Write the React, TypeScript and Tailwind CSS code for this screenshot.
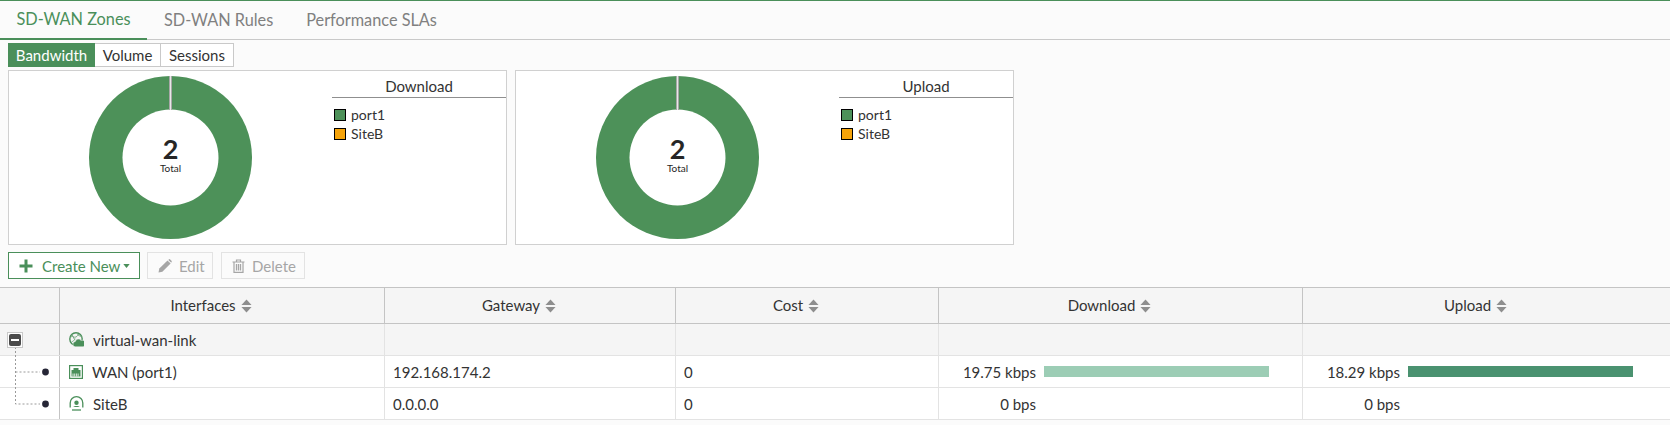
const font = "font-['Lato','Open_Sans',sans-serif]";
const green = "#4a8f5a";

function SortIcon() {
  return (
    <svg viewBox="0 0 12 14" className="ml-[5px] h-[14px] w-[11px]" fill="#8e8e8e">
      <path d="M6 0 L11.5 6 H0.5 Z" />
      <path d="M0.5 8 H11.5 L6 14 Z" />
    </svg>
  );
}

function Donut() {
  return (
    <div className="relative h-[163px] w-[163px]">
      <svg viewBox="0 0 163 163" className="h-full w-full">
        <circle cx="81.5" cy="81.5" r="81.5" fill="#4d9159" />
        <circle cx="81.5" cy="81.5" r="48" fill="#fff" />
        <rect x="80" y="0" width="3" height="34" fill="#a8a8a8" />
        <rect x="81" y="0" width="1" height="34" fill="#e8e8e8" />
      </svg>
      <div className="absolute inset-0 flex flex-col items-center justify-center pb-[7px] text-[#262626]">
        <span className="text-[27px] leading-[27px] font-bold">2</span>
        <span className="mt-[1px] text-[10px] leading-[11px]">Total</span>
      </div>
    </div>
  );
}

function ChartCard({ title }: { title: string }) {
  return (
    <div className="flex h-[175px] w-[499px] border border-[#d0d0d0] bg-white">
      <div className="flex w-[323px] justify-center pt-[5px]">
        <Donut />
      </div>
      <div className="flex-1">
        <div className="mt-[5px] h-[22px] border-b border-[#8f8f8f] text-center text-[15px] leading-[21px] text-[#333]">
          {title}
        </div>
        <div className="mt-[11px] ml-[2px] flex flex-col gap-[7px] text-[14px] leading-[12px] text-[#333]">
          <div className="flex items-center gap-[5px]">
            <span className="h-[12px] w-[12px] border border-black bg-[#4d9159]" />
            port1
          </div>
          <div className="flex items-center gap-[5px]">
            <span className="h-[12px] w-[12px] border border-black bg-[#f5a30a]" />
            SiteB
          </div>
        </div>
      </div>
    </div>
  );
}

function GlobeIcon() {
  return (
    <svg viewBox="0 0 15 15" className="h-[15px] w-[15px]" fill="none" stroke="#6fa67c" strokeWidth="0.9">
      <circle cx="7" cy="7" r="6.2" stroke={green} strokeWidth="1.4" />
      <path d="M1.5 5 C4 3.5 5 6 7 5 S9 2 11 2 M2.5 10.5 C4 8 6 9 6 6.5 M8.5 1 C8 3 10 4 12.8 4.5 M3 2.5 L5.5 7.5" />
      <path
        d="M6 14.8 a2.7 2.7 0 0 1 0.3-5.3 a3.2 3.2 0 0 1 5.8-1 a3.1 3.1 0 0 1 1.9 6.3 Z"
        fill={green}
        stroke="#f5f5f5"
        strokeWidth="0.5"
      />
    </svg>
  );
}

function PortIcon() {
  return (
    <svg viewBox="0 0 14 14" className="h-[14px] w-[14px]">
      <rect x="0.6" y="0.6" width="12.8" height="12.8" fill="#fff" stroke={green} strokeWidth="1.2" />
      <path d="M2.5 5 H4.5 V3 H9.5 V5 H11.5 V11.5 H2.5 Z" fill={green} />
      <path d="M4 8.5 V11.5 M5.7 8.5 V11.5 M7.4 8.5 V11.5 M9.1 8.5 V11.5" stroke="#fff" strokeWidth="0.8" />
    </svg>
  );
}

function SiteIcon() {
  return (
    <svg viewBox="0 0 15 15" className="h-[15px] w-[15px]" fill="none" stroke={green} strokeWidth="1.3">
      <path d="M1.2 11.5 V7 A6.3 6.3 0 0 1 13.8 7 V11.5" />
      <circle cx="7.5" cy="6.8" r="2.2" fill={green} stroke="none" />
      <path d="M4.4 11 C5 9.6 10 9.6 10.6 11 Z" fill={green} stroke="none" />
      <path d="M3 14 H12" />
    </svg>
  );
}

const cols = "grid grid-cols-[60px_325px_291px_263px_364px_1fr]";

function HeaderCell({ label, last }: { label: string; last?: boolean }) {
  return (
    <div
      className={`flex items-center justify-center pr-[22px] text-[15px] text-[#333] ${last ? "" : "border-r border-[#c4c4c4]"}`}
    >
      {label}
      <SortIcon />
    </div>
  );
}

function Rate({ value, bar }: { value: string; bar?: string }) {
  return (
    <div className="flex h-full items-center pl-[9px] text-[15px] text-[#333]">
      <span className="w-[88px] pt-[1px] text-right whitespace-nowrap">{value}</span>
      {bar && <span className={`ml-[8px] h-[11px] w-[225px] ${bar}`} />}
    </div>
  );
}

function Row({ icon, name, gateway, down, up, downBar, upBar }: {
  icon: React.ReactNode;
  name: string;
  gateway: string;
  down: string;
  up: string;
  downBar?: string;
  upBar?: string;
}) {
  return (
    <div className={`${cols} h-[32px] border-b border-[#e3e3e3] bg-white text-[15px] text-[#333]`}>
      <div className="border-r border-[#c4c4c4]" />
      <div className="flex items-center gap-[9px] border-r border-[#e3e3e3] pl-[9px]">
        {icon}
        <span className="pt-[1px]">{name}</span>
      </div>
      <div className="flex items-center border-r border-[#e3e3e3] pt-[1px] pl-[8px]">{gateway}</div>
      <div className="flex items-center border-r border-[#e3e3e3] pt-[1px] pl-[8px]">0</div>
      <div className="border-r border-[#e3e3e3]">
        <Rate value={down} bar={downBar} />
      </div>
      <Rate value={up} bar={upBar} />
    </div>
  );
}

export default function App() {
  return (
    <div className={`${font} h-[425px] w-[1670px] overflow-hidden border-t border-[#4a8f5a] bg-[#fbfbfb]`}>
      <div className="flex h-[39px] border-b border-[#c9c9c9] text-[16.3px] text-[#808080]">
        <div className="-mb-px flex w-[147px] items-center justify-center border-b-2 border-[#4a8f5a] text-[#4a8f5a]">
          SD-WAN Zones
        </div>
        <div className="flex items-center pl-[17px]">SD-WAN Rules</div>
        <div className="flex items-center pl-[33px]">Performance SLAs</div>
      </div>

      <div className="mt-[3px] ml-[8px] flex h-[24px] w-fit border border-[#c9c9c9] bg-white text-[15px] text-[#333]">
        <div className="-my-px -ml-px flex w-[87px] items-center justify-center bg-[#4a8f5a] text-white">Bandwidth</div>
        <div className="flex w-[66px] items-center justify-center border-r border-[#c9c9c9]">Volume</div>
        <div className="flex w-[72px] items-center justify-center">Sessions</div>
      </div>

      <div className="mt-[3px] ml-[8px] flex gap-[8px]">
        <ChartCard title="Download" />
        <ChartCard title="Upload" />
      </div>

      <div className="mt-[7px] ml-[8px] flex h-[27px] gap-[7px] text-[15px]">
        <div className="flex w-[132px] items-center border border-[#4a8f5a] bg-white pl-[10px] text-[#4a8f5a]">
          <svg viewBox="0 0 14 14" className="h-[14px] w-[14px]" fill="#4a8f5a">
            <path d="M5.5 0.5 H8.5 V5.5 H13.5 V8.5 H8.5 V13.5 H5.5 V8.5 H0.5 V5.5 H5.5 Z" />
          </svg>
          <span className="ml-[9px] pt-[1px]">Create New</span>
          <svg viewBox="0 0 8 5" className="ml-[3px] h-[4px] w-[7px]" fill="#4a8f5a">
            <path d="M0 0 H8 L4 5 Z" />
          </svg>
        </div>
        <div className="flex w-[66px] items-center border border-[#e3e3e3] pl-[10px] text-[#a6a6a6]">
          <svg viewBox="0 0 14 14" className="h-[14px] w-[14px]" fill="#a6a6a6">
            <path d="M0.5 13.5 L1.3 9.6 L9.5 1.6 L12.6 4.6 L4.4 12.7 Z" />
            <path d="M10.3 0.9 L11 0.3 Q11.6 -0.1 12.2 0.4 L13.5 1.8 Q14 2.4 13.5 3 L13.3 3.8 Z" />
          </svg>
          <span className="ml-[7px] pt-[1px]">Edit</span>
        </div>
        <div className="ml-[1px] flex w-[84px] items-center border border-[#e3e3e3] pl-[10px] text-[#a6a6a6]">
          <svg viewBox="0 0 13 14" className="h-[14px] w-[13px]" fill="none" stroke="#a6a6a6" strokeWidth="1.2">
            <path d="M0.5 3 H12.5 M4.5 3 V1 H8.5 V3" />
            <path d="M2 3 V13.3 H11 V3" />
            <path d="M4.5 5 V11.5 M6.5 5 V11.5 M8.5 5 V11.5" strokeWidth="1.3" />
          </svg>
          <span className="ml-[7px] pt-[1px]">Delete</span>
        </div>
      </div>

      <div className="relative mt-[8px]">
        <div className={`${cols} h-[37px] border-y border-[#c4c4c4] bg-[#f5f5f5]`}>
          <div className="border-r border-[#c4c4c4]" />
          <HeaderCell label="Interfaces" />
          <HeaderCell label="Gateway" />
          <HeaderCell label="Cost" />
          <HeaderCell label="Download" />
          <HeaderCell label="Upload" last />
        </div>
        <div className={`${cols} h-[32px] border-b border-[#e3e3e3] bg-[#f5f5f5] text-[15px] text-[#333]`}>
          <div className="border-r border-[#c4c4c4]" />
          <div className="flex items-center gap-[9px] border-r border-[#e3e3e3] pl-[9px]">
            <GlobeIcon />
            <span className="pt-[1px]">virtual-wan-link</span>
          </div>
          <div className="border-r border-[#e3e3e3]" />
          <div className="border-r border-[#e3e3e3]" />
          <div className="border-r border-[#e3e3e3]" />
          <div />
        </div>
        <Row
          icon={<PortIcon />}
          name="WAN (port1)"
          gateway="192.168.174.2"
          down="19.75 kbps"
          up="18.29 kbps"
          downBar="bg-[#9ccdb5]"
          upBar="bg-[#4a9270]"
        />
        <Row icon={<SiteIcon />} name="SiteB" gateway="0.0.0.0" down="0 bps" up="0 bps" />

        <svg viewBox="0 0 59 80" className="absolute top-[45px] left-0 h-[80px] w-[59px]" fill="none">
          <path d="M15.5 15 V72 H40 M15.5 40 H40" stroke="#9a9a9a" strokeDasharray="2 2" />
          <circle cx="45.5" cy="40" r="3.4" fill="#262636" />
          <circle cx="45.5" cy="72" r="3.4" fill="#262636" />
        </svg>
        <div className="absolute top-[45px] left-[7px] flex h-[16px] w-[16px] items-center justify-center border border-[#c9c9c9] bg-white">
          <div className="flex h-[12px] w-[12px] items-center justify-center rounded-[2px] bg-[#4b4b4b]">
            <div className="h-[2px] w-[8px] bg-white" />
          </div>
        </div>
      </div>
    </div>
  );
}
